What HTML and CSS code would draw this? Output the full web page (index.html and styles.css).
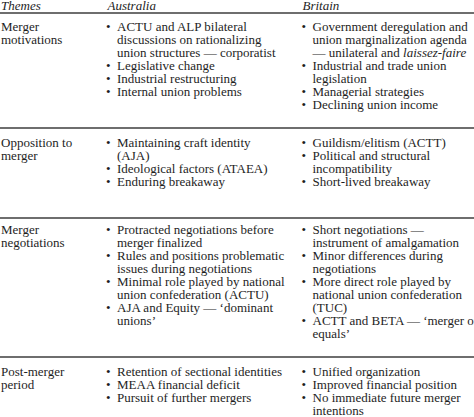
FILE: index.html
```html
<!DOCTYPE html>
<html>
<head>
<meta charset="utf-8">
<link rel="stylesheet" href="styles.css">
</head>
<body>
<div class="tbl">
  <div class="row head">
    <div class="c1">Themes</div>
    <div class="c2">Australia</div>
    <div class="c3">Britain</div>
  </div>
  <div class="row r1">
    <div class="c1">Merger<br>motivations</div>
    <ul class="c2">
      <li>ACTU and ALP bilateral<br>discussions on rationalizing<br>union structures — corporatist</li>
      <li>Legislative change</li>
      <li>Industrial restructuring</li>
      <li>Internal union problems</li>
    </ul>
    <ul class="c3">
      <li>Government deregulation and<br>union marginalization agenda<br>— unilateral and <i>laissez-faire</i></li>
      <li>Industrial and trade union<br>legislation</li>
      <li>Managerial strategies</li>
      <li>Declining union income</li>
    </ul>
  </div>
  <div class="row r2">
    <div class="c1">Opposition to<br>merger</div>
    <ul class="c2">
      <li>Maintaining craft identity<br>(AJA)</li>
      <li>Ideological factors (ATAEA)</li>
      <li>Enduring breakaway</li>
    </ul>
    <ul class="c3">
      <li>Guildism/elitism (ACTT)</li>
      <li>Political and structural<br>incompatibility</li>
      <li>Short-lived breakaway</li>
    </ul>
  </div>
  <div class="row r3">
    <div class="c1">Merger<br>negotiations</div>
    <ul class="c2">
      <li>Protracted negotiations before<br>merger finalized</li>
      <li>Rules and positions problematic<br>issues during negotiations</li>
      <li>Minimal role played by national<br>union confederation (ACTU)</li>
      <li>AJA and Equity — ‘dominant<br>unions’</li>
    </ul>
    <ul class="c3">
      <li>Short negotiations —<br>instrument of amalgamation</li>
      <li>Minor differences during<br>negotiations</li>
      <li>More direct role played by<br>national union confederation<br>(TUC)</li>
      <li>ACTT and BETA — ‘merger of<br>equals’</li>
    </ul>
  </div>
  <div class="row r4">
    <div class="c1">Post-merger<br>period</div>
    <ul class="c2">
      <li>Retention of sectional identities</li>
      <li>MEAA financial deficit</li>
      <li>Pursuit of further mergers</li>
    </ul>
    <ul class="c3">
      <li>Unified organization</li>
      <li>Improved financial position</li>
      <li>No immediate future merger<br>intentions</li>
    </ul>
  </div>
</div>
</body>
</html>
```

FILE: styles.css
```css
html, body {
  margin: 0;
  padding: 0;
  background: #ffffff;
}
body {
  width: 474px;
  height: 417px;
  overflow: hidden;
  font-family: "Liberation Serif", "Times New Roman", serif;
  font-size: 13px;
  line-height: 13px;
  color: #1e1e1e;
}
.tbl {
  width: 474px;
}
.row {
  display: grid;
  grid-template-columns: 106px 195.5px 172.5px;
  border-bottom: 2px solid #6e6e6e;
  white-space: nowrap;
}
.row.r4 {
  border-bottom: none;
}
.head {
  height: 12px;
  line-height: 12px;
  font-style: italic;
}
.c1 {
  padding-left: 1px;
}
.head .c2 {
  padding-left: 1.5px;
}
.head .c3 {
  padding-left: 1px;
}
.r1 { padding: 6px 0 16px; }
.r2 { padding: 6.5px 0 29px; }
.r3 { padding: 4.5px 0 15.5px; }
.r4 { padding: 7px 0 0; }
ul {
  list-style: none;
  margin: 0;
  padding: 0;
}
li {
  position: relative;
  padding-left: 11px;
}
li::before {
  content: "•";
  position: absolute;
  left: 0;
  top: 0;
}
```
